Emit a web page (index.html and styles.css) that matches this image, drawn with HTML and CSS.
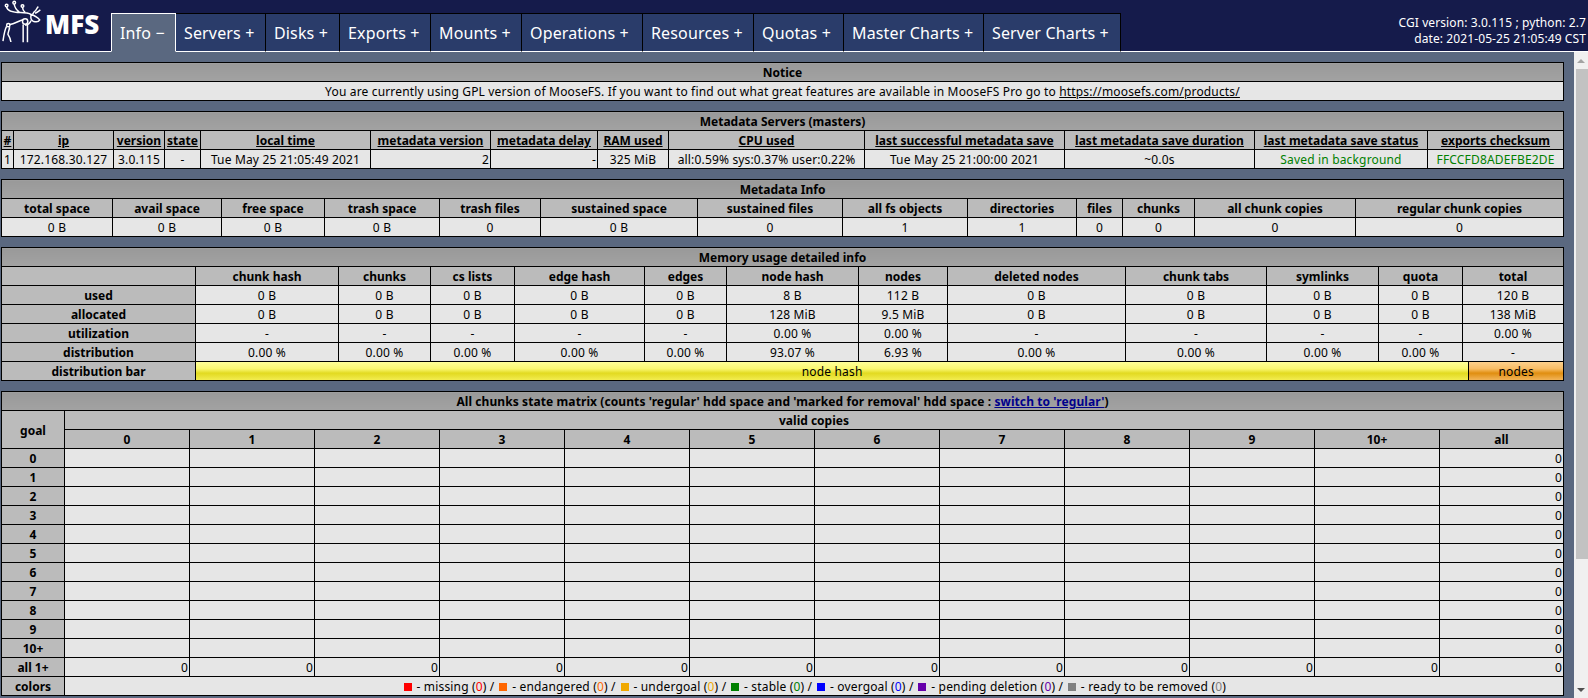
FILE: index.html
```html
<!DOCTYPE html>
<html lang="en">
<head>
<meta charset="utf-8">
<title>MFS Info</title>
<link rel="stylesheet" href="styles.css">
</head>
<body>
<header class="header">
  <div class="logo">
    <svg class="moose" viewBox="0 0 130 130" fill="none" stroke="#fff" stroke-width="4.5">
      <circle cx="20" cy="17" r="4"/><circle cx="43" cy="8" r="4"/><circle cx="68" cy="18" r="4"/>
      <path d="M20 21C22 34 40 38 62 38C75 38 88 40 94 44M43 12C44 22 50 30 58 36M68 22C68 28 70 32 76 38M116 20C110 24 112 30 103 36L98 44M122 30C116 34 112 38 106 40"/>
      <path d="M94 44C100 46 112 50 120 60C116 68 106 66 100 64C96 62 92 54 94 44Z"/>
      <path d="M30 74C44 72 58 62 70 60M94 62C90 72 84 76 76 76"/>
      <circle cx="76" cy="65" r="8"/><circle cx="25" cy="76" r="5"/>
      <path d="M70 74V128M83 74V128M20 80C14 90 12 104 9 124M29 82C28 92 24 98 24 104C28 110 32 116 33 127"/>
    </svg>
    <span class="logo-text">MFS</span>
  </div>
  <nav class="tabs">
    <a class="tab active">Info &#8722;</a>
    <a class="tab">Servers +</a>
    <a class="tab">Disks +</a>
    <a class="tab">Exports +</a>
    <a class="tab">Mounts +</a>
    <a class="tab">Operations +</a>
    <a class="tab">Resources +</a>
    <a class="tab">Quotas +</a>
    <a class="tab">Master Charts +</a>
    <a class="tab">Server Charts +</a>
  </nav>
  <div class="version">CGI version: 3.0.115 ; python: 2.7<br>date: 2021-05-25 21:05:49 CST</div>
</header>
<div class="page">
<main class="content">
  <table class="grid notice">
    <tr><th class="title">Notice</th></tr>
    <tr><td>You are currently using GPL version of MooseFS. If you want to find out what great features are available in MooseFS Pro go to <a class="link" href="#">https://moosefs.com/products/</a></td></tr>
  </table>

  <table class="grid masters">
    <colgroup><col><col><col><col><col><col><col><col><col><col><col><col><col></colgroup>
    <tr><th class="title" colspan="13">Metadata Servers (masters)</th></tr>
    <tr class="links">
      <th><a href="#">#</a></th><th><a href="#">ip</a></th><th><a href="#">version</a></th><th><a href="#">state</a></th><th><a href="#">local time</a></th><th><a href="#">metadata version</a></th><th><a href="#">metadata delay</a></th><th><a href="#">RAM used</a></th><th><a href="#">CPU used</a></th><th><a href="#">last successful metadata save</a></th><th><a href="#">last metadata save duration</a></th><th><a href="#">last metadata save status</a></th><th><a href="#">exports checksum</a></th>
    </tr>
    <tr>
      <td>1</td><td>172.168.30.127</td><td>3.0.115</td><td>-</td><td>Tue May 25 21:05:49 2021</td><td class="num">2</td><td class="num">-</td><td>325 MiB</td><td>all:0.59% sys:0.37% user:0.22%</td><td>Tue May 25 21:00:00 2021</td><td>~0.0s</td><td class="ok">Saved in background</td><td class="ok">FFCCFD8ADEFBE2DE</td>
    </tr>
  </table>

  <table class="grid info">
    <colgroup><col><col><col><col><col><col><col><col><col><col><col><col><col></colgroup>
    <tr><th class="title" colspan="13">Metadata Info</th></tr>
    <tr><th>total space</th><th>avail space</th><th>free space</th><th>trash space</th><th>trash files</th><th>sustained space</th><th>sustained files</th><th>all fs objects</th><th>directories</th><th>files</th><th>chunks</th><th>all chunk copies</th><th>regular chunk copies</th></tr>
    <tr><td>0 B</td><td>0 B</td><td>0 B</td><td>0 B</td><td>0</td><td>0 B</td><td>0</td><td>1</td><td>1</td><td>0</td><td>0</td><td>0</td><td>0</td></tr>
  </table>

  <table class="grid memory">
    <colgroup><col><col><col><col><col><col><col><col><col><col><col><col><col></colgroup>
    <tr><th class="title" colspan="13">Memory usage detailed info</th></tr>
    <tr><th></th><th>chunk hash</th><th>chunks</th><th>cs lists</th><th>edge hash</th><th>edges</th><th>node hash</th><th>nodes</th><th>deleted nodes</th><th>chunk tabs</th><th>symlinks</th><th>quota</th><th>total</th></tr>
    <tr><th>used</th><td>0 B</td><td>0 B</td><td>0 B</td><td>0 B</td><td>0 B</td><td>8 B</td><td>112 B</td><td>0 B</td><td>0 B</td><td>0 B</td><td>0 B</td><td>120 B</td></tr>
    <tr><th>allocated</th><td>0 B</td><td>0 B</td><td>0 B</td><td>0 B</td><td>0 B</td><td>128 MiB</td><td>9.5 MiB</td><td>0 B</td><td>0 B</td><td>0 B</td><td>0 B</td><td>138 MiB</td></tr>
    <tr><th>utilization</th><td>-</td><td>-</td><td>-</td><td>-</td><td>-</td><td>0.00 %</td><td>0.00 %</td><td>-</td><td>-</td><td>-</td><td>-</td><td>0.00 %</td></tr>
    <tr><th>distribution</th><td>0.00 %</td><td>0.00 %</td><td>0.00 %</td><td>0.00 %</td><td>0.00 %</td><td>93.07 %</td><td>6.93 %</td><td>0.00 %</td><td>0.00 %</td><td>0.00 %</td><td>0.00 %</td><td>-</td></tr>
    <tr><th>distribution bar</th><td class="barcell" colspan="12"><div class="bar"><span class="seg yellow" style="width:93.07%">node hash</span><span class="seg orange" style="width:6.93%">nodes</span></div></td></tr>
  </table>

  <table class="grid chunks">
    <colgroup><col><col><col><col><col><col><col><col><col><col><col><col><col></colgroup>
    <tr><th class="title" colspan="13">All chunks state matrix (counts 'regular' hdd space and 'marked for removal' hdd space : <a class="switch" href="#">switch to 'regular'</a>)</th></tr>
    <tr><th rowspan="2">goal</th><th colspan="12">valid copies</th></tr>
    <tr><th>0</th><th>1</th><th>2</th><th>3</th><th>4</th><th>5</th><th>6</th><th>7</th><th>8</th><th>9</th><th>10+</th><th>all</th></tr>
    <tr><th>0</th><td></td><td></td><td></td><td></td><td></td><td></td><td></td><td></td><td></td><td></td><td></td><td class="num">0</td></tr>
    <tr><th>1</th><td></td><td></td><td></td><td></td><td></td><td></td><td></td><td></td><td></td><td></td><td></td><td class="num">0</td></tr>
    <tr><th>2</th><td></td><td></td><td></td><td></td><td></td><td></td><td></td><td></td><td></td><td></td><td></td><td class="num">0</td></tr>
    <tr><th>3</th><td></td><td></td><td></td><td></td><td></td><td></td><td></td><td></td><td></td><td></td><td></td><td class="num">0</td></tr>
    <tr><th>4</th><td></td><td></td><td></td><td></td><td></td><td></td><td></td><td></td><td></td><td></td><td></td><td class="num">0</td></tr>
    <tr><th>5</th><td></td><td></td><td></td><td></td><td></td><td></td><td></td><td></td><td></td><td></td><td></td><td class="num">0</td></tr>
    <tr><th>6</th><td></td><td></td><td></td><td></td><td></td><td></td><td></td><td></td><td></td><td></td><td></td><td class="num">0</td></tr>
    <tr><th>7</th><td></td><td></td><td></td><td></td><td></td><td></td><td></td><td></td><td></td><td></td><td></td><td class="num">0</td></tr>
    <tr><th>8</th><td></td><td></td><td></td><td></td><td></td><td></td><td></td><td></td><td></td><td></td><td></td><td class="num">0</td></tr>
    <tr><th>9</th><td></td><td></td><td></td><td></td><td></td><td></td><td></td><td></td><td></td><td></td><td></td><td class="num">0</td></tr>
    <tr><th>10+</th><td></td><td></td><td></td><td></td><td></td><td></td><td></td><td></td><td></td><td></td><td></td><td class="num">0</td></tr>
    <tr><th>all 1+</th><td class="num">0</td><td class="num">0</td><td class="num">0</td><td class="num">0</td><td class="num">0</td><td class="num">0</td><td class="num">0</td><td class="num">0</td><td class="num">0</td><td class="num">0</td><td class="num">0</td><td class="num">0</td></tr>
    <tr><th>colors</th><td colspan="12"><span class="sq c-missing"></span> - missing (<span class="t-missing">0</span>) / <span class="sq c-endangered"></span> - endangered (<span class="t-endangered">0</span>) / <span class="sq c-undergoal"></span> - undergoal (<span class="t-undergoal">0</span>) / <span class="sq c-stable"></span> - stable (<span class="t-stable">0</span>) / <span class="sq c-overgoal"></span> - overgoal (<span class="t-overgoal">0</span>) / <span class="sq c-pending"></span> - pending deletion (<span class="t-pending">0</span>) / <span class="sq c-ready"></span> - ready to be removed (<span class="t-ready">0</span>)</td></tr>
  </table>
</main>
<aside class="scrollbar">
  <span class="arrow up"></span>
  <span class="thumb"></span>
  <span class="arrow down"></span>
</aside>
</div>
</body>
</html>
```
FILE: styles.css
```css
* { box-sizing: border-box; }
html, body { height: 100%; }
body {
  margin: 0;
  overflow: hidden;
  display: flex;
  flex-direction: column;
  background: #5a6880;
  color: #000;
  font-family: "Noto Sans", "Open Sans", sans-serif;
  font-size: 12px;
}

/* Header */
.header {
  flex: none;
  height: 52px;
  display: flex;
  background: #151b4b;
  border-bottom: 1px solid #fff;
  color: #fff;
}
.logo {
  width: 111px;
  display: flex;
  align-items: flex-start;
}
.moose { width: 43px; height: 43px; flex: none; }
.logo-text {
  margin: 6px 0 0 2px;
  font-family: "Open Sans", sans-serif;
  font-weight: 800;
  font-size: 26px;
  line-height: 36px;
}
.tabs {
  display: flex;
  align-self: flex-end;
  height: 39px;
  margin-bottom: -1px;
}
.tab {
  display: flex;
  align-items: center;
  padding: 1px 0 0 8px;
  height: 39px;
  background: #2a3c6a;
  border: 1px solid #000;
  border-left: 0;
  border-bottom: 1px solid #fff;
  font-size: 16px;
  letter-spacing: .15px;
  white-space: nowrap;
}
.tab:nth-child(1) { width: 65px; }
.tab:nth-child(2) { width: 90px; }
.tab:nth-child(3) { width: 74px; }
.tab:nth-child(4) { width: 91px; }
.tab:nth-child(5) { width: 91px; }
.tab:nth-child(6) { width: 121px; }
.tab:nth-child(7) { width: 111px; }
.tab:nth-child(8) { width: 90px; }
.tab:nth-child(9) { width: 140px; }
.tab:nth-child(10) { width: 137px; }
.tab.active {
  background: #5a6880;
  border: 1px solid #fff;
  border-bottom-color: #5a6880;
}
.version {
  margin-left: auto;
  padding: 15px 2px 0 0;
  text-align: right;
  font-size: 12px;
  letter-spacing: .1px;
  line-height: 16px;
  white-space: nowrap;
}

/* Page */
.page {
  flex: 1;
  min-height: 0;
  display: flex;
}
.content {
  flex: 1;
  min-width: 0;
  padding: 10px 0 0 1px;
  display: flex;
  flex-direction: column;
  gap: 10px;
  overflow: hidden;
}

/* Tables */
.grid {
  flex: none;
  width: 1563px;
  table-layout: fixed;
  border-collapse: collapse;
  line-height: 17px;
}
.grid th, .grid td {
  height: 18px;
  padding: 1px 0 0;
  border: 1px solid #000;
  text-align: center;
  white-space: nowrap;
  overflow: hidden;
}
.grid th { background: #bbb; font-weight: 700; }
.grid td { background: #e6e6e6; letter-spacing: .165px; }
.grid th.title { background: linear-gradient(#999, #a2a2a2); }
.chunks th.title { letter-spacing: .09px; }
.grid td.num { text-align: right; padding-right: 1px; }
.grid td.ok { color: #008000; }
.links a, .link { color: #000; text-decoration: underline; }
.switch { color: #00008b; text-decoration: underline; }

.masters col:nth-child(1) { width: 12px; }
.masters col:nth-child(2) { width: 100px; }
.masters col:nth-child(3) { width: 51px; }
.masters col:nth-child(4) { width: 36px; }
.masters col:nth-child(5) { width: 170px; }
.masters col:nth-child(6) { width: 120px; }
.masters col:nth-child(7) { width: 107px; }
.masters col:nth-child(8) { width: 71px; }
.masters col:nth-child(9) { width: 196px; }
.masters col:nth-child(10) { width: 200px; }
.masters col:nth-child(11) { width: 190px; }
.masters col:nth-child(12) { width: 173px; }
.masters col:nth-child(13) { width: 136px; }

.info col:nth-child(1) { width: 111px; }
.info col:nth-child(2) { width: 109px; }
.info col:nth-child(3) { width: 103px; }
.info col:nth-child(4) { width: 115px; }
.info col:nth-child(5) { width: 101px; }
.info col:nth-child(6) { width: 157px; }
.info col:nth-child(7) { width: 145px; }
.info col:nth-child(8) { width: 125px; }
.info col:nth-child(9) { width: 109px; }
.info col:nth-child(10) { width: 46px; }
.info col:nth-child(11) { width: 72px; }
.info col:nth-child(12) { width: 161px; }
.info col:nth-child(13) { width: 208px; }

.memory col:nth-child(1) { width: 194px; }
.memory col:nth-child(2) { width: 143px; }
.memory col:nth-child(3) { width: 92px; }
.memory col:nth-child(4) { width: 84px; }
.memory col:nth-child(5) { width: 130px; }
.memory col:nth-child(6) { width: 82px; }
.memory col:nth-child(7) { width: 132px; }
.memory col:nth-child(8) { width: 89px; }
.memory col:nth-child(9) { width: 178px; }
.memory col:nth-child(10) { width: 141px; }
.memory col:nth-child(11) { width: 112px; }
.memory col:nth-child(12) { width: 84px; }
.memory col:nth-child(13) { width: 101px; }

.chunks col { width: 125px; }
.chunks col:nth-child(1) { width: 63px; }
.chunks col:nth-child(13) { width: 124px; }

/* Distribution bar */
.grid td.barcell { background: none; padding: 0; }
.bar { display: flex; height: 18px; line-height: 19px; }
.seg { display: block; }
.yellow { background: linear-gradient(#ffff99 0%, #faf770 38%, #e2da20 62%, #f2ec50 100%); }
.orange {
  border-left: 1px solid #000;
  background: linear-gradient(#fdd08c 0%, #f8bc64 38%, #e08e10 62%, #f2b458 100%);
}

/* Legend */
.sq { display: inline-block; width: 8px; height: 8px; margin: 0 1.6px; }
.c-missing { background: #f00; }
.c-endangered { background: #f60; }
.c-undergoal { background: #f0a800; }
.c-stable { background: #008000; }
.c-overgoal { background: #00f; }
.c-pending { background: #60a; }
.c-ready { background: #808080; }
.t-missing { color: #f00; }
.t-endangered { color: #f60; }
.t-undergoal { color: #f0a800; }
.t-stable { color: #008000; }
.t-overgoal { color: #00f; }
.t-pending { color: #60a; }
.t-ready { color: #808080; }

/* Scrollbar */
.scrollbar {
  flex: none;
  width: 14px;
  display: flex;
  flex-direction: column;
  align-items: stretch;
  background: #f0f0f0;
}
.thumb {
  flex: none;
  height: 490px;
  margin-left: 2px;
  background: #c2c2c2;
}
.arrow {
  flex: none;
  align-self: center;
  width: 0;
  height: 0;
  border-left: 4px solid transparent;
  border-right: 4px solid transparent;
}
.arrow.up { border-bottom: 4px solid #a3a3a3; margin: 7px 0 6px; }
.arrow.down { border-top: 4px solid #505050; margin: auto 0 6px; }
```
